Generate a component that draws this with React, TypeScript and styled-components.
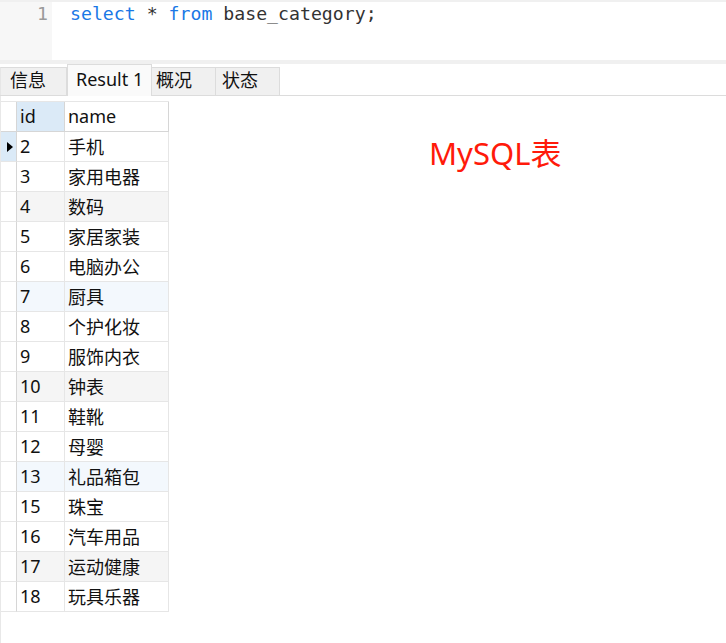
import React from "react";
import styled, { createGlobalStyle } from "styled-components";

const Global = createGlobalStyle`
  html, body { margin: 0; padding: 0; background: #fff; }
  body { width: 726px; height: 643px; overflow: hidden; font-family: "Noto Sans", "Noto Sans CJK SC", sans-serif; }
`;

const Page = styled.div`
  display: flex;
  flex-direction: column;
  width: 726px;
  height: 643px;
`;

const Editor = styled.div`
  display: flex;
  height: 58px;
  border-top: 2px solid #f0f0f0;
`;

const Gutter = styled.div`
  width: 52px;
  background: #f7f7f7;
  box-sizing: border-box;
  padding-right: 4px;
  text-align: right;
  font-family: "DejaVu Sans Mono", "Liberation Mono", monospace;
  font-size: 18.2px;
  line-height: 24px;
  color: #9a9a9a;
`;

const Code = styled.div`
  padding-left: 18px;
  font-family: "DejaVu Sans Mono", "Liberation Mono", monospace;
  font-size: 18.2px;
  line-height: 24px;
  color: #333;
  white-space: pre;
`;

const Kw = styled.span`
  color: #1a78e6;
`;

const Band = styled.div`
  height: 4px;
  background: #f0f0f0;
`;

const TabBar = styled.div`
  display: flex;
  align-items: flex-end;
  height: 32px;
  box-sizing: border-box;
  position: relative;
  &::after {
    content: "";
    position: absolute;
    left: 0;
    right: 0;
    bottom: 0;
    height: 1px;
    background: #dcdcdc;
  }
`;

const Tab = styled.div<{ $w: number; $pl: number; $active?: boolean }>`
  width: ${(p) => p.$w}px;
  height: ${(p) => (p.$active ? 32 : 29)}px;
  box-sizing: border-box;
  padding-left: ${(p) => p.$pl}px;
  padding-bottom: ${(p) => (p.$active ? 3 : 4)}px;
  background: ${(p) => (p.$active ? "#fafafa" : "#f0f0f0")};
  border: 1px solid #dcdcdc;
  border-bottom: ${(p) => (p.$active ? "none" : "1px solid #dcdcdc")};
  border-left: ${(p) => (p.$active ? "1px solid #dcdcdc" : "none")};
  font-size: 18px;
  line-height: 22px;
  color: #111;
  display: flex;
  align-items: center;
  position: relative;
  z-index: ${(p) => (p.$active ? 1 : 0)};
  &:first-child { border-left: 1px solid #e6e6e6; }
`;

const Body = styled.div`
  flex: 1;
  display: flex;
  padding-top: 5px;
  border-left: 1px solid #e8e8e8;
`;

const Grid = styled.div`
  display: grid;
  grid-template-columns: 16px 48px 104px;
  grid-auto-rows: 30px;
  align-self: flex-start;
  border-top: 1px solid #e6e6e6;
`;

const Cell = styled.div<{ $bg?: string; $head?: boolean }>`
  box-sizing: border-box;
  border-right: 1px solid ${(p) => (p.$head ? "#d6d6d6" : "#e6e6e6")};
  border-bottom: 1px solid ${(p) => (p.$head ? "#d6d6d6" : "#e6e6e6")};
  background: ${(p) => p.$bg || "#fff"};
  padding-left: 3px;
  padding-bottom: 2px;
  font-size: 18px;
  color: #111;
  display: flex;
  align-items: center;
  white-space: nowrap;
  overflow: hidden;
`;

const Indicator = styled(Cell)`
  padding-left: 0;
  padding-bottom: 0;
  justify-content: center;
  border-right-color: #d6d6d6;
`;

const Arrow = styled.span`
  width: 0;
  height: 0;
  border-top: 5px solid transparent;
  border-bottom: 5px solid transparent;
  border-left: 6px solid #000;
  margin-left: 2px;
`;

const Canvas = styled.div`
  flex: 1;
  display: flex;
  justify-content: flex-start;
  padding-left: 260px;
  padding-top: 34px;
`;

const Label = styled.div`
  color: #ff1a0a;
  font-size: 31px;
  font-family: "Noto Sans", "Noto Sans CJK SC", sans-serif;
  line-height: 36px;
  height: 36px;
`;

const rows: [string, string][] = [
  ["2", "手机"],
  ["3", "家用电器"],
  ["4", "数码"],
  ["5", "家居家装"],
  ["6", "电脑办公"],
  ["7", "厨具"],
  ["8", "个护化妆"],
  ["9", "服饰内衣"],
  ["10", "钟表"],
  ["11", "鞋靴"],
  ["12", "母婴"],
  ["13", "礼品箱包"],
  ["15", "珠宝"],
  ["16", "汽车用品"],
  ["17", "运动健康"],
  ["18", "玩具乐器"],
];

function rowBg(i: number): string | undefined {
  if (i % 3 !== 2) return undefined;
  return ((i / 3) | 0) % 2 === 0 ? "#f5f5f5" : "#f3f8fd";
}

export default function App() {
  return (
    <Page>
      <Global />
      <Editor>
        <Gutter>1</Gutter>
        <Code>
          <Kw>select</Kw> * <Kw>from</Kw> base_category;
        </Code>
      </Editor>
      <Band />
      <TabBar>
        <Tab $w={67} $pl={9}>信息</Tab>
        <Tab $w={85} $pl={8} $active>Result 1</Tab>
        <Tab $w={64} $pl={4}>概况</Tab>
        <Tab $w={64} $pl={6}>状态</Tab>
      </TabBar>
      <Body>
        <Grid>
          <Indicator $head />
          <Cell $head $bg="#dbeaf7">id</Cell>
          <Cell $head>name</Cell>
          {rows.map(([id, name], i) => (
            <React.Fragment key={id}>
              <Indicator $bg={i === 0 ? "#dbeaf7" : undefined}>
                {i === 0 ? <Arrow /> : null}
              </Indicator>
              <Cell $bg={rowBg(i)}>{id}</Cell>
              <Cell $bg={rowBg(i)}>{name}</Cell>
            </React.Fragment>
          ))}
        </Grid>
        <Canvas>
          <Label>MySQL表</Label>
        </Canvas>
      </Body>
    </Page>
  );
}
